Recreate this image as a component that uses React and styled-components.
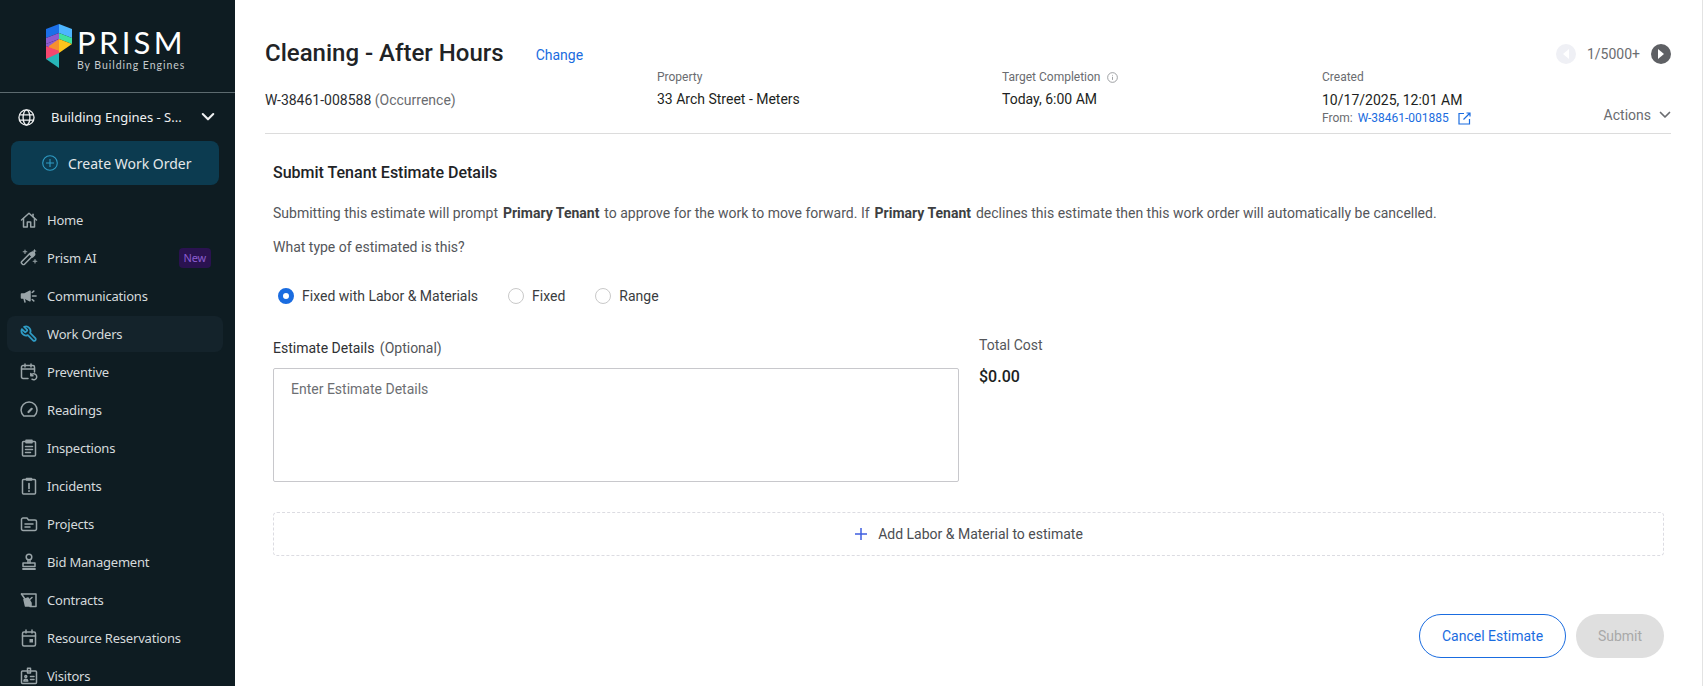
import React from "react";
import styled, { createGlobalStyle } from "styled-components";

const GlobalStyle = createGlobalStyle`
    html, body, #root {
        margin: 0;
        height: 100%;
    }
    body {
        overflow: hidden;
        background: #fff;
        font-family: Roboto, "Liberation Sans", sans-serif;
    }
    * {
        box-sizing: border-box;
    }
`;

const Page = styled.div`
    display: flex;
    height: 686px;
    overflow: hidden;
`;

const Sidebar = styled.aside`
    flex: 0 0 235px;
    height: 686px;
    overflow: hidden;
    background: #0e1c22;
    font-family: "Noto Sans", sans-serif;
`;

const LogoArea = styled.div`
    display: flex;
    align-items: flex-start;
    gap: 5px;
    height: 93px;
    padding: 24px 0 0 46px;
    border-bottom: 1px solid #5c6a6f;
`;

const LogoText = styled.div`
    display: flex;
    flex-direction: column;
    color: #fff;
`;

const LogoName = styled.span`
    font-family: Lato, sans-serif;
    font-weight: 400;
    font-size: 31px;
    line-height: 31px;
    letter-spacing: 3.3px;
    margin-top: 3px;
`;

const LogoSub = styled.span`
    font-family: Lato, sans-serif;
    font-size: 10.5px;
    line-height: 12px;
    letter-spacing: 0.95px;
    color: #c6cbcd;
    margin-top: 1px;
`;

const OrgRow = styled.div`
    display: flex;
    align-items: center;
    height: 48px;
    padding: 0 20px 0 18px;
    color: #eef0f1;
    font-size: 13px;
`;

const OrgName = styled.span`
    margin-left: 16px;
    flex: 1;
`;

const CreateButton = styled.div`
    display: flex;
    align-items: center;
    gap: 10px;
    height: 44px;
    margin: 0 16px 0 11px;
    padding-left: 31px;
    border-radius: 8px;
    background: #0c3b50;
    color: #e4e8ea;
    font-size: 14px;
`;

const Nav = styled.nav`
    display: flex;
    flex-direction: column;
    gap: 2px;
    margin: 17px 12px 0 7px;
`;

const NavItem = styled.div`
    display: flex;
    align-items: center;
    gap: 9px;
    height: 36px;
    padding: 0 12px 0 13px;
    border-radius: 8px;
    background: ${(props) => (props.$active ? "#14232b" : "transparent")};
    color: #d5dadc;
    font-size: 13px;
    letter-spacing: -0.2px;
    svg {
        flex: 0 0 18px;
        color: ${(props) => (props.$active ? "#2f9bc4" : "#9aa5a9")};
    }
`;

const NewBadge = styled.span`
    margin-left: auto;
    padding: 0 5px;
    height: 20px;
    line-height: 20px;
    border-radius: 4px;
    background: #2a1250;
    color: #8a5ccf;
    font-size: 11px;
    letter-spacing: -0.2px;
`;

const Main = styled.main`
    flex: 1;
    height: 686px;
    padding: 39px 31px 0 30px;
    border-right: 1px solid #e3e3e3;
    margin-right: 2px;
    color: #1d1f22;
`;

const TitleRow = styled.div`
    display: flex;
    align-items: center;
    height: 28px;
`;

const Title = styled.h1`
    margin: 0;
    font-size: 24px;
    line-height: 28px;
    font-weight: 500;
    color: #212326;
`;

const ChangeLink = styled.a`
    margin: 3px 0 0 32px;
    font-size: 14px;
    color: #1a6ce0;
`;

const Pager = styled.div`
    display: flex;
    align-items: center;
    gap: 11px;
    margin: 2px 0 0 auto;
    font-size: 14px;
    color: #6b6d70;
`;

const PagerDot = styled.span`
    display: flex;
    align-items: center;
    justify-content: center;
    width: 20px;
    height: 20px;
    border-radius: 50%;
    background: ${(props) => (props.$disabled ? "#eff0f5" : "#5e6064")};
    color: #fff;
`;

const MetaGrid = styled.div`
    display: grid;
    grid-template-columns: 392px 345px 320px 1fr;
    margin-top: 2px;
    height: 65px;
    border-bottom: 1px solid #dcdcdc;
`;

const WorkNumber = styled.div`
    padding-top: 21px;
    font-size: 14px;
    line-height: 20px;
    color: #2a2c2f;
    span {
        color: #6a6c70;
    }
`;

const MetaLabel = styled.div`
    display: flex;
    align-items: center;
    gap: 6px;
    font-size: 12px;
    line-height: 16px;
    color: #6a6c70;
`;

const MetaValue = styled.div`
    margin-top: ${(props) => props.$top || "4px"};
    font-size: 14px;
    line-height: 20px;
    color: #1d1f22;
`;

const FromRow = styled.div`
    display: flex;
    align-items: center;
    font-size: 12px;
    line-height: 16px;
    color: #6a6c70;
    a {
        margin: 0 9px 0 5px;
        color: #1a6ce0;
    }
`;

const CreatedCell = styled.div`
    display: flex;
    justify-content: space-between;
`;

const Actions = styled.div`
    display: flex;
    align-items: center;
    gap: 8px;
    margin-top: 36px;
    height: 20px;
    font-size: 14px;
    color: #6a6c70;
`;

const Content = styled.section`
    padding: 29px 7px 0 8px;
`;

const Heading = styled.h2`
    margin: 0;
    font-size: 16px;
    line-height: 20px;
    font-weight: 500;
    color: #212326;
`;

const Text = styled.p`
    margin: ${(props) => props.$top} 0 0;
    font-size: 14px;
    line-height: 20px;
    color: #54565a;
    b {
        margin: 0 1.5px;
        font-weight: 700;
        color: #3d3f42;
    }
`;

const RadioRow = styled.div`
    display: flex;
    margin: 29px 0 0 5px;
`;

const RadioOption = styled.label`
    display: flex;
    align-items: center;
    gap: 8px;
    margin-right: ${(props) => props.$gap};
    font-size: 14px;
    line-height: 20px;
    color: #3a3c40;
`;

const RadioMark = styled.span`
    width: 16px;
    height: 16px;
    border-radius: 50%;
    border: ${(props) =>
        props.$checked ? "5px solid #1a6ce0" : "1px solid #c9c9c9"};
    background: #fff;
`;

const FormRow = styled.div`
    display: flex;
    gap: 20px;
    margin-top: 32px;
`;

const FieldColumn = styled.div`
    flex: 0 0 686px;
`;

const FieldLabel = styled.div`
    font-size: 14px;
    line-height: 20px;
    color: #2f3134;
    span {
        margin-left: 2px;
        color: #54565a;
    }
`;

const DetailsInput = styled.textarea`
    display: block;
    width: 100%;
    height: 114px;
    margin-top: 10px;
    padding: 11px 17px;
    border: 1px solid #c8c8cc;
    border-radius: 2px;
    resize: none;
    outline: none;
    font-family: inherit;
    font-size: 14px;
    line-height: 18px;
    &::placeholder {
        color: #6d6f73;
        opacity: 1;
    }
`;

const TotalColumn = styled.div`
    margin-top: -3px;
`;

const TotalLabel = styled.div`
    font-size: 14px;
    line-height: 20px;
    color: #54565a;
`;

const TotalValue = styled.div`
    margin-top: 12px;
    font-size: 16px;
    line-height: 20px;
    font-weight: 500;
    color: #1d1f22;
`;

const AddBox = styled.div`
    display: flex;
    align-items: center;
    justify-content: center;
    gap: 10px;
    height: 44px;
    margin-top: 30px;
    border: 1px dashed #dcdce2;
    border-radius: 4px;
    font-size: 14px;
    color: #4b4d51;
`;

const ButtonRow = styled.div`
    display: flex;
    justify-content: flex-end;
    gap: 10px;
    margin-top: 58px;
`;

const Button = styled.button`
    height: 44px;
    width: ${(props) => props.$width};
    border-radius: 22px;
    border: ${(props) => (props.$outline ? "1px solid #1a6ce0" : "none")};
    background: ${(props) => (props.$outline ? "#fff" : "#dfdfdf")};
    color: ${(props) => (props.$outline ? "#1a6ce0" : "#a9a9a9")};
    font-family: inherit;
    font-size: 14px;
    font-weight: 400;
`;

const Line = (props) => (
    <svg
        width="18"
        height="18"
        viewBox="0 0 18 18"
        fill="none"
        stroke="currentColor"
        strokeWidth="1.5"
        strokeLinecap="round"
        strokeLinejoin="round"
        {...props}
    />
);

const HomeIcon = () => (
    <Line>
        <path d="M1.5 9 9 2.2 16.5 9" />
        <path d="M3.5 7.500V16h3.800v-5h3.400v5h3.800V7.500" />
        <path d="M13 3.200v2.600" />
    </Line>
);

const WandIcon = () => (
    <Line>
        <rect x="-1.200" y="-1.900" width="14" height="3.800" rx="1.400" transform="translate(3 14) rotate(-45)" />
        <path d="m9.800 5.300 2.700 2.700L14 6.500a1.900 1.900 0 0 0-2.700-2.700Z" fill="currentColor" />
        <path d="M5 1v3.500M3.200 2.800h3.600M14.500 0.800v2.500M13.200 2h2.600M15 10.500v3.500M13.200 12.200h3.600" strokeWidth="1.100" />
    </Line>
);

const MegaphoneIcon = () => (
    <Line>
        <path d="M1.500 7h3.200L10 4.200v9.600L4.700 11H1.500Z" fill="currentColor" />
        <path d="M4 11.200 5 15" />
        <path d="M12.500 9h3.600M12.200 5.500l1.600-1.400M12.200 12.500l1.600 1.400" />
    </Line>
);

const WrenchIcon = () => (
    <svg width="18" height="18" viewBox="0 0 24 24" fill="none" stroke="currentColor" strokeWidth="2.400" strokeLinecap="round" strokeLinejoin="round">
        <g transform="translate(24 0) scale(-1 1)">
            <path d="M14.700 6.300a1 1 0 0 0 0 1.400l1.600 1.600a1 1 0 0 0 1.400 0l3.770-3.770a6 6 0 0 1-7.940 7.940l-6.910 6.910a2.120 2.120 0 0 1-3-3l6.910-6.910a6 6 0 0 1 7.940-7.940l-3.760 3.760z" />
        </g>
    </svg>
);

const CalendarRepeatIcon = () => (
    <Line>
        <path d="M8 15.500H3a1.500 1.500 0 0 1-1.500-1.500V4A1.500 1.500 0 0 1 3 2.500h10A1.500 1.500 0 0 1 14.500 4v5" />
        <path d="M1.500 6h13M5 1v3M11 1v3" />
        <path d="M11 12.500a3 3 0 1 1 1 3.700M10.800 10.500v2.200h2.200" />
    </Line>
);

const GaugeIcon = () => (
    <Line>
        <path d="M4 16.500h10.500a8 8 0 1 0-10.500 0Z" transform="translate(-0.200 -1.500)" />
        <path d="m8.500 11 3.200-3.200" strokeWidth="2.200" />
    </Line>
);

const ClipboardIcon = () => (
    <Line>
        <rect x="2.500" y="2.500" width="13" height="14.500" rx="1" />
        <path d="M6 1.200h6v2.600H6Z" fill="currentColor" />
        <path d="M5.500 7.500h7M5.500 10.500h7M5.500 13.500h5" />
    </Line>
);

const AlertBoardIcon = () => (
    <Line>
        <rect x="2.500" y="2.500" width="13" height="14.500" rx="1" />
        <path d="M6.500 1.500h5v1.500h-5Z" fill="currentColor" />
        <path d="M9 6.500v5M9 13.800v.4" strokeWidth="1.700" />
    </Line>
);

const FolderIcon = () => (
    <Line>
        <path d="M1.500 4.500A1.500 1.500 0 0 1 3 3h4l1.500 2H15a1.500 1.500 0 0 1 1.500 1.500V14a1.500 1.500 0 0 1-1.500 1.500H3A1.500 1.500 0 0 1 1.500 14Z" />
        <path d="M5 9h8M5 12h5" />
    </Line>
);

const StampIcon = () => (
    <Line>
        <circle cx="9" cy="4" r="2.800" />
        <path d="M8 6.800V10M10 6.800V10" />
        <path d="M3 10h12v3.500H3Z" />
        <path d="M3 16h12" strokeWidth="1.800" />
    </Line>
);

const ContractIcon = () => (
    <Line>
        <path d="M1.500 3h14.500v12.500H10" />
        <path d="M1.500 3 5 8M12 6.500 8 10" />
        <path d="M4 8.500 8 7l3 5v3H5.500Z" fill="currentColor" />
    </Line>
);

const CalendarIcon = () => (
    <Line>
        <rect x="2.500" y="3" width="13" height="14" rx="1.500" />
        <path d="M2.500 7h13M6 1v3M12 1v3" />
        <rect x="9.500" y="10" width="3.500" height="3.500" fill="currentColor" stroke="none" />
    </Line>
);

const VisitorIcon = () => (
    <Line>
        <rect x="1.500" y="4" width="15" height="12.500" rx="1" />
        <path d="M7.500 1.200h3V6h-3Z" />
        <circle cx="5.800" cy="9.500" r="1" />
        <path d="M3.800 14c.3-2.400 3.700-2.400 4 0ZM10.500 9.500h3.500M10.500 12.500h3.500" />
    </Line>
);

const navItems = [
    { label: "Home", icon: <HomeIcon /> },
    { label: "Prism AI", icon: <WandIcon />, badge: "New" },
    { label: "Communications", icon: <MegaphoneIcon /> },
    { label: "Work Orders", icon: <WrenchIcon />, active: true },
    { label: "Preventive", icon: <CalendarRepeatIcon /> },
    { label: "Readings", icon: <GaugeIcon /> },
    { label: "Inspections", icon: <ClipboardIcon /> },
    { label: "Incidents", icon: <AlertBoardIcon /> },
    { label: "Projects", icon: <FolderIcon /> },
    { label: "Bid Management", icon: <StampIcon /> },
    { label: "Contracts", icon: <ContractIcon /> },
    { label: "Resource Reservations", icon: <CalendarIcon /> },
    { label: "Visitors", icon: <VisitorIcon /> },
];

const PrismMark = () => (
    <svg width="26" height="44" viewBox="0 0 26 44">
        <polygon points="13,0 0,5 0,14 13,9" fill="#1c6fe8" />
        <polygon points="13,0 26,5 26,14 13,9" fill="#4db5ff" />
        <polygon points="0,14 13,9 13,15 0,20" fill="#8e5bd0" />
        <polygon points="13,9 26,14 26,20 13,15" fill="#3fe0a0" />
        <polygon points="0,20 13,15 13,28 0,22" fill="#8e5bd0" />
        <polygon points="3,22 13,15 13,27 3,24" fill="#f78f2e" />
        <polygon points="13,15 26,20 13,29" fill="#fdc41c" />
        <polygon points="0,22 13,27 13,32 0,35" fill="#f5476f" />
        <polygon points="0,35 13,29 13,44" fill="#27b5b8" />
    </svg>
);

const GlobeIcon = () => (
    <svg width="17" height="17" viewBox="0 0 18 18" fill="none" stroke="currentColor" strokeWidth="1.400">
        <circle cx="9" cy="9" r="8" />
        <ellipse cx="9" cy="9" rx="3.600" ry="8" />
        <path d="M1.500 6.200h15M1.500 11.800h15" />
    </svg>
);

const Chevron = ({ size = 12, width = 1.500 }) => (
    <svg width={size} height={size} viewBox="0 0 12 12" fill="none" stroke="currentColor" strokeWidth={width} strokeLinecap="round" strokeLinejoin="round">
        <path d="m1.500 3.500 4.500 4.500 4.500-4.500" />
    </svg>
);

const PlusCircle = () => (
    <svg width="16" height="16" viewBox="0 0 16 16" fill="none" stroke="#2f9bc4" strokeWidth="1.100">
        <circle cx="8" cy="8" r="7.300" />
        <path d="M8 4v8M4 8h8" />
    </svg>
);

const InfoIcon = () => (
    <svg width="11" height="11" viewBox="0 0 12 12" fill="none" stroke="#8c8e92" strokeWidth="0.900">
        <circle cx="6" cy="6" r="5.300" />
        <path d="M6 5.200v3.400M6 3.200v.8" />
    </svg>
);

const ExternalIcon = () => (
    <svg width="13" height="13" viewBox="0 0 13 13" fill="none" stroke="#1a6ce0" strokeWidth="1.200">
        <path d="M6 1.500H1v10.500h10.500V7" />
        <path d="M5.500 7.500 12 1M8.500 1H12v3.500" />
    </svg>
);

const App = () => {
    return (
        <Page>
            <GlobalStyle />
            <Sidebar>
                <LogoArea>
                    <PrismMark />
                    <LogoText>
                        <LogoName>PRISM</LogoName>
                        <LogoSub>By Building Engines</LogoSub>
                    </LogoText>
                </LogoArea>
                <OrgRow>
                    <GlobeIcon />
                    <OrgName>Building Engines - S...</OrgName>
                    <Chevron size={14} width={1.800} />
                </OrgRow>
                <CreateButton>
                    <PlusCircle />
                    Create Work Order
                </CreateButton>
                <Nav>
                    {navItems.map((item) => (
                        <NavItem key={item.label} $active={item.active}>
                            {item.icon}
                            {item.label}
                            {item.badge && <NewBadge>{item.badge}</NewBadge>}
                        </NavItem>
                    ))}
                </Nav>
            </Sidebar>
            <Main>
                <TitleRow>
                    <Title>Cleaning - After Hours</Title>
                    <ChangeLink>Change</ChangeLink>
                    <Pager>
                        <PagerDot $disabled>
                            <svg width="8" height="10" viewBox="0 0 8 10">
                                <path d="M7 0v10L1 5Z" fill="currentColor" />
                            </svg>
                        </PagerDot>
                        1/5000+
                        <PagerDot>
                            <svg width="8" height="10" viewBox="0 0 8 10">
                                <path d="M1 0v10l6-5Z" fill="currentColor" />
                            </svg>
                        </PagerDot>
                    </Pager>
                </TitleRow>
                <MetaGrid>
                    <WorkNumber>
                        W-38461-008588 <span>(Occurrence)</span>
                    </WorkNumber>
                    <div>
                        <MetaLabel>Property</MetaLabel>
                        <MetaValue>33 Arch Street - Meters</MetaValue>
                    </div>
                    <div>
                        <MetaLabel>
                            Target Completion
                            <InfoIcon />
                        </MetaLabel>
                        <MetaValue>Today, 6:00 AM</MetaValue>
                    </div>
                    <CreatedCell>
                        <div>
                            <MetaLabel>Created</MetaLabel>
                            <MetaValue $top="5px">10/17/2025, 12:01 AM</MetaValue>
                            <FromRow>
                                From:
                                <a>W-38461-001885</a>
                                <ExternalIcon />
                            </FromRow>
                        </div>
                        <Actions>
                            Actions
                            <Chevron size={12} width={1.700} />
                        </Actions>
                    </CreatedCell>
                </MetaGrid>
                <Content>
                    <Heading>Submit Tenant Estimate Details</Heading>
                    <Text $top="20px">
                        Submitting this estimate will prompt <b>Primary Tenant</b> to approve for the work to move forward. If <b>Primary Tenant</b> declines this estimate then this work order will automatically be cancelled.
                    </Text>
                    <Text $top="14px">What type of estimated is this?</Text>
                    <RadioRow>
                        <RadioOption $gap="30px">
                            <RadioMark $checked />
                            Fixed with Labor &amp; Materials
                        </RadioOption>
                        <RadioOption $gap="30px">
                            <RadioMark />
                            Fixed
                        </RadioOption>
                        <RadioOption>
                            <RadioMark />
                            Range
                        </RadioOption>
                    </RadioRow>
                    <FormRow>
                        <FieldColumn>
                            <FieldLabel>
                                Estimate Details <span>(Optional)</span>
                            </FieldLabel>
                            <DetailsInput placeholder="Enter Estimate Details" />
                        </FieldColumn>
                        <TotalColumn>
                            <TotalLabel>Total Cost</TotalLabel>
                            <TotalValue>$0.00</TotalValue>
                        </TotalColumn>
                    </FormRow>
                    <AddBox>
                        <svg width="14" height="14" viewBox="0 0 14 14" fill="none" stroke="#3f5fe0" strokeWidth="1.500">
                            <path d="M7 1v12M1 7h12" />
                        </svg>
                        Add Labor &amp; Material to estimate
                    </AddBox>
                    <ButtonRow>
                        <Button $outline $width="147px">Cancel Estimate</Button>
                        <Button $width="88px">Submit</Button>
                    </ButtonRow>
                </Content>
            </Main>
        </Page>
    );
};

export default App;
